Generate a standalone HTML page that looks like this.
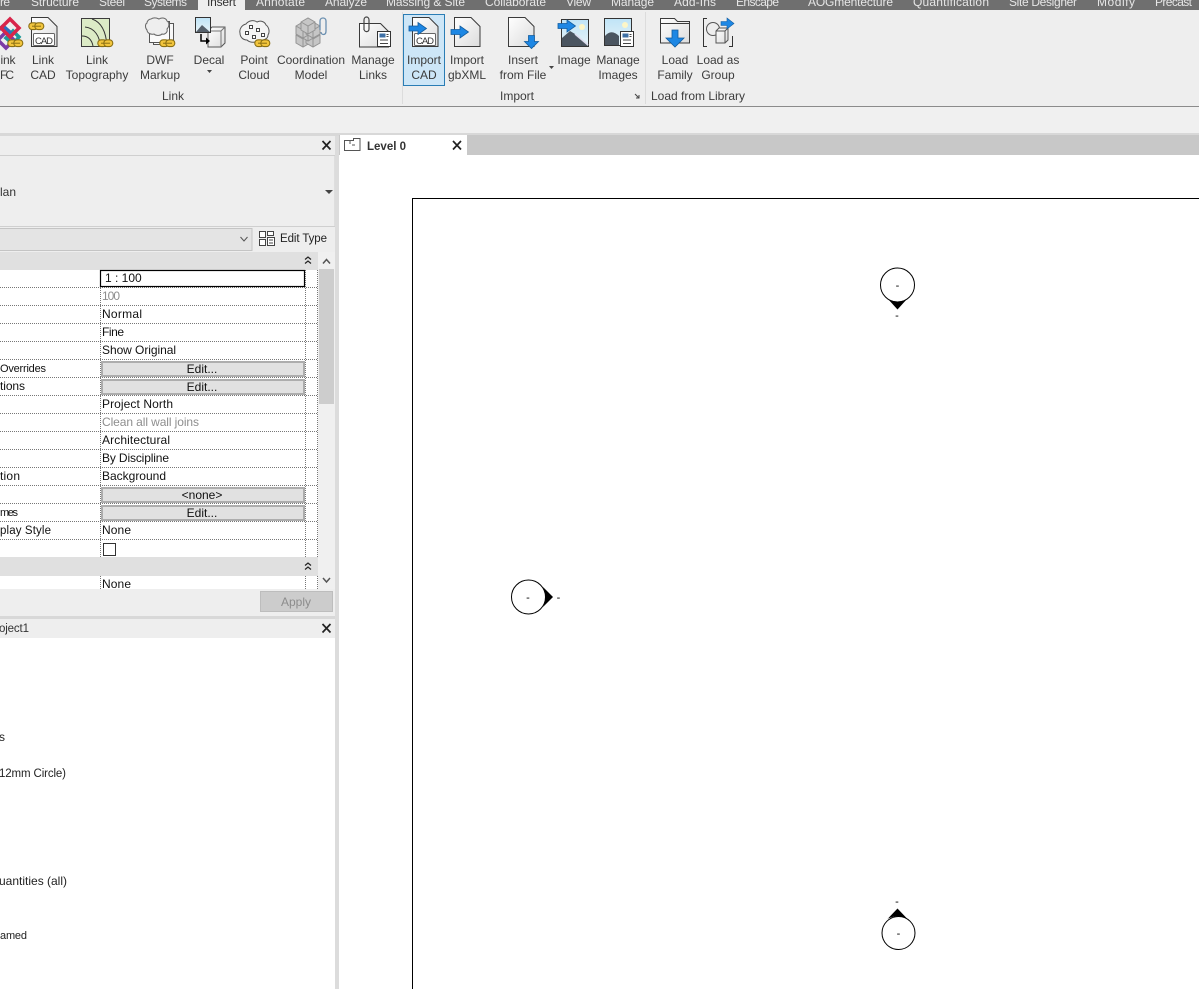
<!DOCTYPE html>
<html><head><meta charset="utf-8"><title>Revit Insert ribbon</title>
<style>
html,body{margin:0;padding:0;background:#fff;width:1199px;height:989px;overflow:hidden}
svg{display:block;font-family:"Liberation Sans",sans-serif;font-size:12px}
.r text{fill:#3c3c3c;text-anchor:middle}
.t text{fill:#e6e6e6}
.p text{fill:#111}
.dot{stroke:#777;stroke-width:1;stroke-dasharray:1 1;fill:none}
.b{fill:#e1e1e1;stroke:#adadad;stroke-width:2}
</style></head><body>
<svg width="1199" height="989" viewBox="0 0 1199 989" xmlns="http://www.w3.org/2000/svg">
<defs>
<linearGradient id="pg" x1="0" y1="0" x2="1" y2="1"><stop offset="0" stop-color="#fff"/><stop offset="1" stop-color="#dcdcdc"/></linearGradient>
<linearGradient id="sky" x1="0" y1="0" x2="0" y2="1"><stop offset="0" stop-color="#bfe4f7"/><stop offset="1" stop-color="#e8f3f7"/></linearGradient>
<g id="chain"><rect x=".8" y=".8" width="9" height="6.800" rx="3.300" fill="#f2c53d" stroke="#8a6f14" stroke-width="1.100"/><rect x="6.800" y=".8" width="9" height="6.800" rx="3.300" fill="#f2c53d" stroke="#8a6f14" stroke-width="1.100"/><path d="M4 4.200h9" stroke="#8a6f14" stroke-width="1"/></g>
<path id="arrR" d="M0 3.500h9V0l8.500 6-8.500 6V8.500H0z" fill="#1d87e4" stroke="#125c9e" stroke-width=".8"/>
<path id="arrD" d="M4 0h6v6h4l-7 7-7-7h4z" fill="#1d87e4" stroke="#125c9e" stroke-width=".8"/>
<path id="page" d="M.5.500H17l9 9V29.500H.500z" fill="url(#pg)" stroke="#3a3a3a"/>
<g id="minidoc"><rect x=".5" y=".5" width="13" height="15" fill="#fff" stroke="#333"/><rect x="2.500" y="2.500" width="6" height="4" fill="#3d6fa5"/><path d="M9.500 3.500h2M9.500 5.500h2M3 9h8M3 12.500h8" stroke="#444"/></g>
<g id="cube"><path d="M0 5l7-4 7 4v8l-7 4-7-4z" fill="#c6c6c6" stroke="#949494"/><path d="M0 5l7 4 7-4M7 9v8" stroke="#949494" fill="none"/></g>
</defs>

<!-- backgrounds -->
<rect x="0" y="0" width="1199" height="10" fill="#6f6f6f"/>
<rect x="0" y="10" width="1199" height="96" fill="#eeeeee"/>
<rect x="0" y="106" width="1199" height="1" fill="#8b8b8b"/>
<rect x="0" y="107" width="1199" height="26" fill="#f0f0f0"/>
<rect x="0" y="133" width="1199" height="3" fill="#d8d8d8"/>
<rect x="198" y="0" width="47" height="11" fill="#eeeeee"/>
<rect x="402" y="12" width="1" height="92" fill="#dcdcdc"/>
<rect x="645" y="12" width="1" height="92" fill="#dcdcdc"/>

<!-- top tabs -->
<g class="t">
<text x="0" y="6" textLength="10">re</text>
<text x="31" y="6" textLength="48">Structure</text>
<text x="99" y="6" textLength="26">Steel</text>
<text x="144" y="6" textLength="43">Systems</text>
<text x="207" y="6" textLength="29" style="fill:#333">Insert</text>
<text x="256" y="6" textLength="49">Annotate</text>
<text x="325" y="6" textLength="42">Analyze</text>
<text x="386" y="6" textLength="79">Massing &amp; Site</text>
<text x="485" y="6" textLength="61">Collaborate</text>
<text x="566" y="6" textLength="25">View</text>
<text x="611" y="6" textLength="43">Manage</text>
<text x="674" y="6" textLength="42">Add-Ins</text>
<text x="736" y="6" textLength="43">Enscape</text>
<text x="808" y="6" textLength="85">AOGmentecture</text>
<text x="913" y="6" textLength="76">Quantification</text>
<text x="1009" y="6" textLength="68">Site Designer</text>
<text x="1097" y="6" textLength="38">Modify</text>
<text x="1155" y="6" textLength="37">Precast</text>
</g>

<!-- Import CAD highlight -->
<rect x="403.500" y="14.500" width="41" height="71" fill="#cde6f7" stroke="#2a7db5"/>

<!-- ribbon icons -->
<!-- Link IFC -->
<g fill="none" stroke-width="3.500">
<path d="M-2 40l8-8 8 8-8 8z" stroke="#7b3aa5"/>
<path d="M6 38l7-7 6 6-6 7z" stroke="#1f9a9a"/>
<path d="M-5 33l8-7 8 7" stroke="#2b6fc0"/>
<path d="M1 28l9-9 9 9-9 9z" stroke="#d8254a"/>
</g>
<use href="#chain" x="7" y="39"/>
<!-- Link CAD -->
<use href="#page" x="31" y="17"/>
<rect x="33.500" y="33.500" width="21" height="12" rx="1" fill="#fff" stroke="#666"/>
<text x="44" y="44" text-anchor="middle" font-size="9.500" fill="#333" textLength="18">CAD</text>
<use href="#chain" x="28" y="22"/>
<!-- Topography -->
<rect x="81.500" y="18.500" width="28" height="28" fill="#dcebc6" stroke="#3c3c3c"/>
<path d="M92 19c9 3 14 12 15 27M85 27c10 1 15 10 15 19M82 36c7 0 10 5 11 10" fill="none" stroke="#333"/>
<use href="#chain" x="97" y="39"/>
<!-- DWF -->
<rect x="153.500" y="23.500" width="20" height="21" fill="#f8f8f8" stroke="#555"/>
<rect x="149.500" y="21.500" width="20" height="21" fill="#fafafa" stroke="#555"/>
<path d="M151 19c3-2 6-1 8 0 3-2 7-1 8 2 3 2 2 6 0 8 1 3-2 6-5 5-2 2-6 2-8 0-3 1-7-1-7-4-2-2-2-6 0-7 0-2 2-4 4-4z" fill="#eee" stroke="#666"/>
<use href="#chain" x="159" y="39"/>
<!-- Decal -->
<path d="M208 31l4-4h13v16l-4 4h-13z" fill="url(#pg)" stroke="#555"/>
<path d="M208 31h13v16M221 31l4-4" fill="none" stroke="#777"/>
<rect x="195.500" y="17.500" width="15" height="15" fill="url(#sky)" stroke="#333"/>
<path d="M196 32l6-7 8 7z" fill="#55606b"/>
<path d="M201 34v7h6" fill="none" stroke="#000" stroke-width="1.500"/><path d="M206 37.500l4 3.500-4 3.500z" fill="#000"/>
<!-- Point Cloud -->
<path d="M246 24c3-4 8-4 11-2 4-2 8 0 9 3 3 2 4 7 2 10 0 4-5 6-9 5-3 3-9 3-12 0-4 0-7-3-7-7-1-4 2-8 6-9z" fill="#f4f4f4" stroke="#555"/>
<g fill="#fff" stroke="#444"><rect x="245.500" y="31.500" width="3" height="3"/><rect x="249.500" y="25.500" width="3" height="3"/><rect x="252.500" y="35.500" width="3" height="3"/><rect x="256.500" y="28.500" width="3" height="3"/><rect x="261.500" y="33.500" width="3" height="3"/></g>
<use href="#chain" x="254" y="39"/>
<!-- Coordination -->
<use href="#cube" x="296" y="30"/><use href="#cube" x="306" y="30"/><use href="#cube" x="301" y="24"/><use href="#cube" x="296" y="21"/><use href="#cube" x="306" y="21"/><use href="#cube" x="301" y="17"/>
<path d="M320 30V21c0-4 6-4 6 0v10c0 5-5 4-5 1" fill="none" stroke="#6a8fb0" stroke-width="1.300"/>
<!-- Manage Links -->
<path d="M359.500 23.500h21l8 8v15.500h-29z" fill="url(#pg)" stroke="#3a3a3a"/>
<path d="M364 30V20c0-4 5-4 5 0v9c0 4-5 3-5 0" fill="none" stroke="#444" stroke-width="1.200"/>
<use href="#minidoc" x="377" y="31"/>
<!-- Import CAD -->
<use href="#page" x="412" y="17"/>
<rect x="414.500" y="33.500" width="21" height="12" rx="1" fill="#fff" stroke="#666"/>
<text x="425" y="44" text-anchor="middle" font-size="9.500" fill="#333" textLength="18">CAD</text>
<use href="#arrR" x="409" y="22.500"/>
<!-- gbXML -->
<use href="#page" x="454" y="17"/>
<use href="#arrR" x="451" y="26"/>
<!-- Insert from File -->
<use href="#page" x="508" y="17"/>
<use href="#arrD" x="524.500" y="35.500"/>
<path d="M549 66h5l-2.500 3z" fill="#444"/>
<!-- Image -->
<rect x="561.500" y="19.500" width="27" height="27" fill="url(#sky)" stroke="#333"/>
<circle cx="582" cy="27" r="3" fill="#fdf6c8"/>
<path d="M562 46V38l8-7 5 3 13 12z" fill="#4b5560"/><path d="M575 34l13 11" stroke="#dde" stroke-width="1.500"/>
<use href="#arrR" x="558" y="20"/>
<!-- Manage Images -->
<rect x="604.500" y="18.500" width="27" height="27" fill="url(#sky)" stroke="#333"/>
<circle cx="625" cy="25" r="3" fill="#fdf6c8"/>
<path d="M605 45V36c4-5 9-5 14 0v9z" fill="#4b5560"/>
<use href="#minidoc" x="620" y="31"/>
<!-- Load Family -->
<path d="M660.500 43V18.500h14l3 3h12V43z" fill="url(#pg)" stroke="#3a3a3a"/>
<path d="M660.500 23.500h29" stroke="#3a3a3a"/>
<path d="M672 30h6v8h6l-9 9-9-9h6z" fill="#1d87e4" stroke="#125c9e" stroke-width=".8"/>
<!-- Load as Group -->
<path d="M707 18.500h-3.500v28H707M729 46.500h3.500V36" fill="none" stroke="#333"/>
<circle cx="713" cy="29" r="6.500" fill="#eee" stroke="#555"/>
<path d="M716 31l3-3h9v12l-3 3h-9z" fill="url(#pg)" stroke="#555"/><path d="M716 31h9v12M725 31l3-3" fill="none" stroke="#555"/>
<path d="M721 21.500h6V18l7 5.500-7 5.500v-3.500h-6z" fill="#1d87e4" stroke="#125c9e" stroke-width=".6"/>

<!-- ribbon labels -->
<g class="r">
<text x="8" y="64" textLength="15">ink</text><text x="7" y="79" textLength="14">FC</text>
<text x="43" y="64">Link</text><text x="43" y="79">CAD</text>
<text x="97" y="64">Link</text><text x="97" y="79">Topography</text>
<text x="160" y="64">DWF</text><text x="160" y="79">Markup</text>
<text x="209" y="64">Decal</text>
<text x="254" y="64">Point</text><text x="254" y="79">Cloud</text>
<text x="311" y="64">Coordination</text><text x="311" y="79">Model</text>
<text x="373" y="64">Manage</text><text x="373" y="79">Links</text>
<text x="424" y="64">Import</text><text x="424" y="79">CAD</text>
<text x="467" y="64">Import</text><text x="467" y="79">gbXML</text>
<text x="523" y="64">Insert</text><text x="523" y="79">from File</text>
<text x="574" y="64">Image</text>
<text x="618" y="64">Manage</text><text x="618" y="79">Images</text>
<text x="675" y="64">Load</text><text x="675" y="79">Family</text>
<text x="718" y="64">Load as</text><text x="718" y="79">Group</text>
<text x="173" y="100">Link</text>
<text x="517" y="100">Import</text>
<text x="698" y="100">Load from Library</text>
</g>
<path d="M207 70h5l-2.500 3z" fill="#444"/>
<path d="M635 94l4 4M639 95v3h-3" fill="none" stroke="#444"/>

<!-- properties panel -->
<rect x="0" y="136" width="336" height="480" fill="#eeeeee"/>
<path d="M322.500 141l8 8.500M330.500 141l-8 8.500" stroke="#222" stroke-width="1.700"/>
<rect x="-2" y="155.500" width="337" height="71" fill="#eeeeee" stroke="#cfcfcf"/>
<text x="0" y="196" fill="#333">lan</text>
<path d="M325 190h8l-4 4z" fill="#444"/>
<rect x="-2" y="228.500" width="254" height="22" fill="#e4e4e4" stroke="#c4c4c4"/>
<path d="M240.500 237l3.500 4 3.500-4" fill="none" stroke="#555"/>
<g fill="#fff" stroke="#444"><rect x="259.500" y="231.500" width="6" height="6"/><rect x="259.500" y="239.500" width="6" height="6"/><rect x="267.500" y="231.500" width="6" height="4"/><rect x="267.500" y="237.500" width="7" height="8"/></g>
<path d="M269 240h4M269 243h4" stroke="#444"/>
<text x="280" y="242" fill="#222" textLength="47" font-size="11.500">Edit Type</text>

<!-- table -->
<rect x="0" y="252" width="335" height="337" fill="#fff"/>
<rect x="0" y="252" width="318" height="18" fill="#e0e0e0"/>
<rect x="0" y="557" width="318" height="19" fill="#e0e0e0"/>
<g class="dot">
<path d="M0 287.500H318M0 305.500H318M0 323.500H318M0 341.500H318M0 359.500H318M0 377.500H318M0 395.500H318M0 413.500H318M0 431.500H318M0 449.500H318M0 467.500H318M0 485.500H318M0 503.500H318M0 521.500H318M0 539.500H318"/>
<path d="M100.500 270V557M100.500 576V589M305.500 270V557M305.500 576V589M317.500 270V557M317.500 576V589"/>
</g>
<rect x="100.500" y="270.500" width="204" height="16" fill="#fff" stroke="#000" stroke-width="1.200"/>
<path d="M305 259.500l3-2.500 3 2.500M305 263.500l3-2.500 3 2.500" fill="none" stroke="#222" stroke-width="1.200"/>
<path d="M305 565.500l3-2.500 3 2.500M305 569.500l3-2.500 3 2.500" fill="none" stroke="#222" stroke-width="1.200"/>
<rect class="b" x="102" y="362" width="202" height="14"/>
<rect class="b" x="102" y="380" width="202" height="14"/>
<rect class="b" x="102" y="488" width="202" height="14"/>
<rect class="b" x="102" y="506" width="202" height="14"/>
<rect x="103.500" y="543.500" width="12" height="12" fill="#fff" stroke="#333"/>
<g class="p">
<text x="105" y="282">1 : 100</text>
<text x="102" y="300" style="fill:#8e8e8e" textLength="18">100</text>
<text x="102" y="318" textLength="40">Normal</text>
<text x="102" y="336" textLength="22">Fine</text>
<text x="102" y="354" textLength="74">Show Original</text>
<text x="202" y="373" text-anchor="middle">Edit...</text>
<text x="202" y="391" text-anchor="middle">Edit...</text>
<text x="102" y="408" textLength="71">Project North</text>
<text x="102" y="426" style="fill:#8e8e8e" textLength="97">Clean all wall joins</text>
<text x="102" y="444" textLength="68">Architectural</text>
<text x="102" y="462" textLength="67">By Discipline</text>
<text x="102" y="480" textLength="64">Background</text>
<text x="202" y="499" text-anchor="middle">&lt;none&gt;</text>
<text x="202" y="517" text-anchor="middle">Edit...</text>
<text x="102" y="534" textLength="29">None</text>
<text x="102" y="588" textLength="29">None</text>
<text x="0" y="372" textLength="46" font-size="11">Overrides</text>
<text x="0" y="390" textLength="25">tions</text>
<text x="0" y="480" textLength="20">tion</text>
<text x="0" y="516" textLength="18" font-size="11">mes</text>
<text x="0" y="534" textLength="51" font-size="11.500">play Style</text>
</g>
<!-- scrollbar -->
<rect x="318" y="252" width="17" height="337" fill="#f0f0f0"/>
<rect x="319" y="269" width="15" height="135" fill="#cdcdcd"/>
<path d="M323 263.500l3.500-4 3.500 4" fill="none" stroke="#555" stroke-width="1.500"/>
<path d="M323 578l3.500 4 3.500-4" fill="none" stroke="#555" stroke-width="1.500"/>
<rect x="0" y="589" width="336" height="27" fill="#eeeeee"/>
<rect x="260.500" y="591.500" width="72" height="20" fill="#cccccc" stroke="#bdbdbd"/>
<text x="296" y="606" text-anchor="middle" fill="#8c8c8c">Apply</text>

<!-- project browser -->
<rect x="0" y="616" width="336" height="3" fill="#d8d8d8"/>
<rect x="0" y="619" width="336" height="19" fill="#eeeeee"/>
<rect x="0" y="638" width="335" height="351" fill="#fff"/>
<text x="-1" y="632" fill="#333" textLength="30" font-size="11.500">oject1</text>
<path d="M322.500 624l8 8.500M330.500 624l-8 8.500" stroke="#222" stroke-width="1.700"/>
<g fill="#222">
<text x="-1" y="741">s</text>
<text x="-1" y="777" textLength="67" font-size="11.500">12mm Circle)</text>
<text x="-1" y="885" textLength="68">uantities (all)</text>
<text x="0" y="939" textLength="27" font-size="11">amed</text>
</g>

<!-- gutter, view tabs -->
<rect x="335" y="136" width="4" height="853" fill="#dcdcdc"/>
<rect x="339" y="135" width="860" height="20" fill="#c8c8c8"/>
<rect x="340" y="135" width="127" height="20" fill="#fff"/>
<path d="M344.500 140.500h9v-2h6.500v12h-15.500zM350 141v3M355 145h-3" fill="#fff" stroke="#555"/>
<text x="367" y="150" fill="#333" font-weight="bold" textLength="39" font-size="11.500">Level 0</text>
<path d="M453 141l8 8.500M461 141l-8 8.500" stroke="#222" stroke-width="1.700"/>

<!-- canvas -->
<path d="M412.500 989V198.500H1199" fill="none" stroke="#000"/>
<g fill="none" stroke="#000">
<circle cx="897.500" cy="285" r="17"/>
<circle cx="528.500" cy="597" r="17"/>
<circle cx="898.500" cy="933" r="16.500"/>
</g>
<path d="M888 299q9.500 5 19 0L897.500 309.500z" fill="#000"/>
<path d="M543 587q5 10 0 20l10-10z" fill="#000"/>
<path d="M887.500 919q10-5.500 20 0L897.500 908.500z" fill="#000"/>
<g fill="#000" font-size="11" text-anchor="middle">
<text x="897.500" y="289">-</text>
<text x="897" y="319">-</text>
<text x="528" y="601">-</text>
<text x="558.500" y="601">-</text>
<text x="897" y="905">-</text>
<text x="898.500" y="937">-</text>
</g>
</svg>
</body></html>
